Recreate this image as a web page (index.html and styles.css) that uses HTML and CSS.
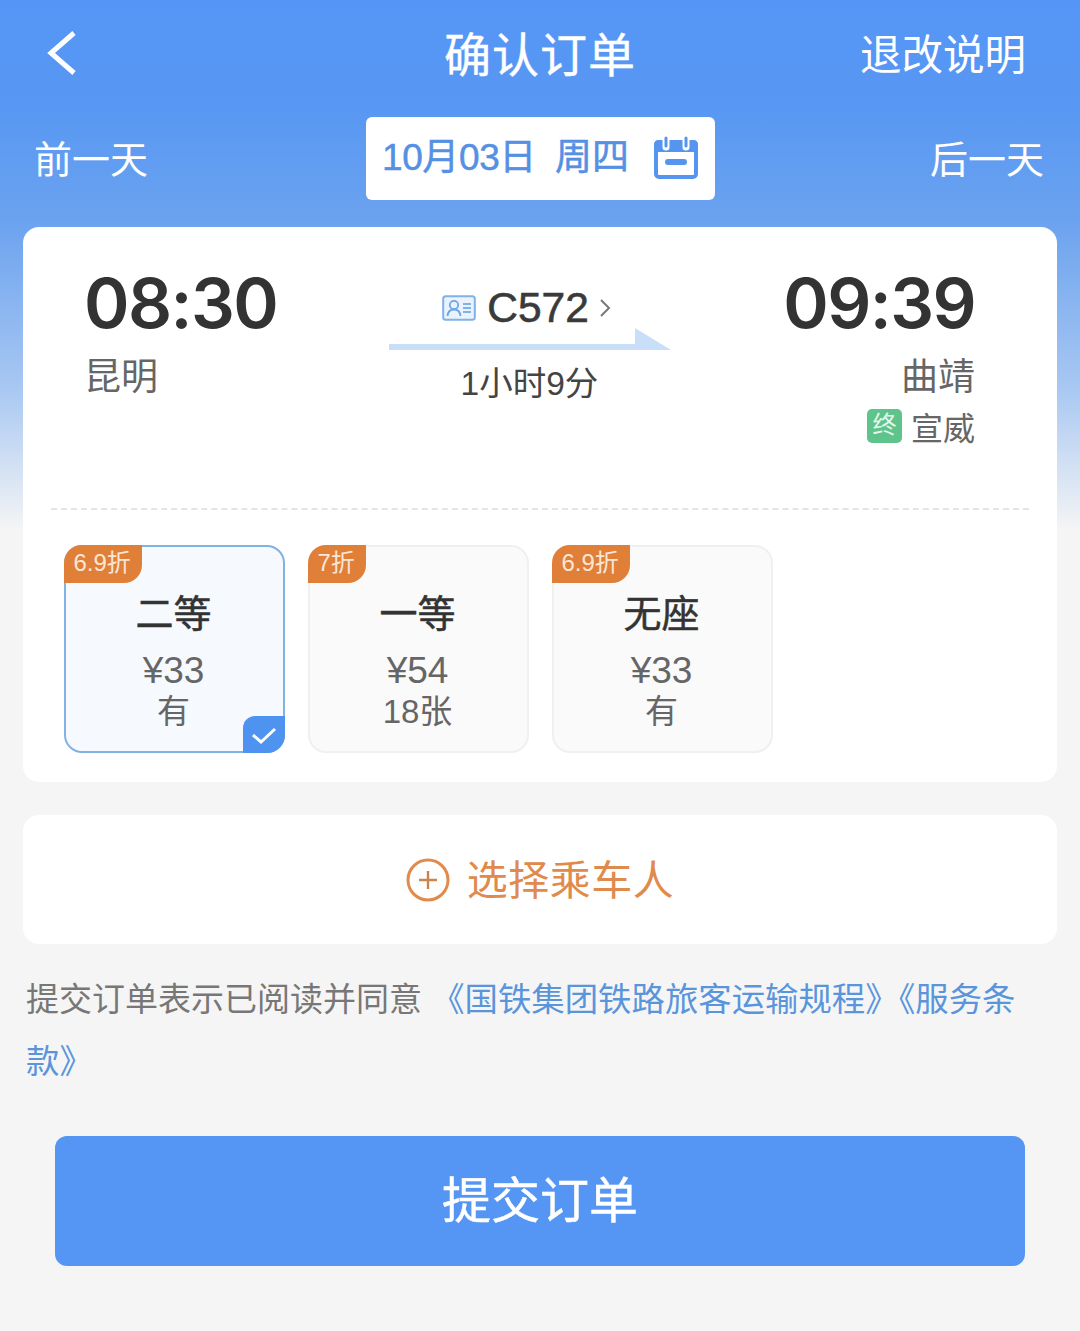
FILE: index.html
```html
<!DOCTYPE html>
<html lang="zh-CN">

<head>
    <meta charset="utf-8">
    <title>确认订单</title>
    <link rel="stylesheet" href="styles.css">
</head>

<body>
    <div class="page">
        <div class="top-nav">
            <svg class="back-icon" width="32" height="48" viewBox="0 0 32 48">
                <path d="M28 4 L5 24 L28 44" fill="none" stroke="#fff" stroke-width="5" />
            </svg>
            <div class="nav-title">确认订单</div>
            <div class="nav-link">退改说明</div>
        </div>

        <div class="date-row">
            <div class="date-side">前一天</div>
            <div class="date-box">
                <span class="date-text">10月03日</span>
                <span class="date-week">周四</span>
                <svg class="cal-icon" width="46" height="44" viewBox="0 0 46 44">
                    <rect x="3" y="6" width="40" height="35" rx="3" fill="#fff" stroke="#5595f0" stroke-width="4" />
                    <path d="M3 9 Q3 6 6 6 H40 Q43 6 43 9 V14 H3 Z" fill="#5595f0" stroke="#5595f0" stroke-width="4" stroke-linejoin="round" />
                    <path d="M13 3 V11 M33 3 V11" stroke="#fff" stroke-width="7" stroke-linecap="round" />
                    <path d="M13 2 V10 M33 2 V10" stroke="#5595f0" stroke-width="3" stroke-linecap="round" />
                    <rect x="12" y="23" width="22" height="6" rx="3" fill="#5595f0" />
                </svg>
            </div>
            <div class="date-side">后一天</div>
        </div>

        <div class="card train-card">
            <div class="train-info">
                <div class="station-col">
                    <div class="time">08:30</div>
                    <div class="station">昆明</div>
                </div>
                <div class="middle-col">
                    <div class="train-no">
                        <svg width="34" height="26" viewBox="0 0 34 26">
                            <rect x="1.2" y="1.2" width="31.6" height="23.6" rx="2.5" fill="#eaf3fd" stroke="#7fb2e8" stroke-width="2" />
                            <circle cx="12" cy="10" r="4.2" fill="none" stroke="#6ea6e6" stroke-width="1.8" />
                            <path d="M5.5 21 C6 16 9 14.5 12 14.5 C15 14.5 18 16 18.5 21" fill="none" stroke="#6ea6e6" stroke-width="1.8" />
                            <path d="M21 9 H29 M21 13 H29 M21 17 H29" stroke="#7fb2e8" stroke-width="1.8" />
                        </svg>
                        <span class="train-code">C572</span>
                        <svg width="12" height="22" viewBox="0 0 12 22">
                            <path d="M2 3 L10 11 L2 19" fill="none" stroke="#777" stroke-width="2" />
                        </svg>
                    </div>
                    <svg class="arrow" width="282" height="24" viewBox="0 0 282 24">
                        <path d="M0 16 H246 V0 L282 22 H0 Z" fill="#c9def8" />
                    </svg>
                    <div class="duration">1小时9分</div>
                </div>
                <div class="station-col end-col">
                    <div class="time">09:39</div>
                    <div class="station">曲靖</div>
                    <div class="terminal">
                        <span class="terminal-tag">终</span>
                        <span class="terminal-name">宣威</span>
                    </div>
                </div>
            </div>

            <div class="dash-line"></div>

            <div class="seat-list">
                <div class="seat seat-active">
                    <div class="seat-badge">6.9折</div>
                    <div class="seat-name">二等</div>
                    <div class="seat-price">¥33</div>
                    <div class="seat-left">有</div>
                    <div class="seat-check">
                        <svg width="26" height="20" viewBox="0 0 26 20">
                            <path d="M2 10 L10 17 L24 4" fill="none" stroke="#fff" stroke-width="3" />
                        </svg>
                    </div>
                </div>
                <div class="seat">
                    <div class="seat-badge">7折</div>
                    <div class="seat-name">一等</div>
                    <div class="seat-price">¥54</div>
                    <div class="seat-left">18张</div>
                </div>
                <div class="seat">
                    <div class="seat-badge">6.9折</div>
                    <div class="seat-name">无座</div>
                    <div class="seat-price">¥33</div>
                    <div class="seat-left">有</div>
                </div>
            </div>
        </div>

        <div class="card passenger-card">
            <svg width="44" height="44" viewBox="0 0 44 44">
                <circle cx="22" cy="22" r="20" fill="none" stroke="#e08a4c" stroke-width="3" />
                <path d="M22 13 V31 M13 22 H31" stroke="#c98550" stroke-width="2.4" />
            </svg>
            <span class="passenger-text">选择乘车人</span>
        </div>

        <p class="agreement">提交订单表示已阅读并同意 <a href="#">《国铁集团铁路旅客运输规程》《服务条</a><a href="#">款》</a></p>

        <div class="submit-btn">提交订单</div>
    </div>
</body>

</html>
```

FILE: styles.css
```css
* {
    box-sizing: border-box;
}

html, body {
    margin: 0;
    padding: 0;
}

body {
    font-family: "Liberation Sans", "Noto Sans CJK SC", sans-serif;
    background-color: #f5f5f5;
}

.page {
    width: 1080px;
    height: 1331px;
    overflow: hidden;
    background: linear-gradient(to bottom, #5595f5 0px, #5898f3 110px, #6ba2ef 220px, #a9c8f2 390px, #f5f5f5 530px);
}

.top-nav {
    position: relative;
    height: 106px;
    display: flex;
    align-items: center;
    justify-content: center;
    color: #fff;
}

.back-icon {
    position: absolute;
    left: 46px;
    top: 29px;
}

.nav-title {
    font-size: 47px;
    letter-spacing: 1px;
    margin-bottom: 4px;
    -webkit-text-stroke: 0.4px #fff;
}

.nav-link {
    position: absolute;
    right: 54px;
    top: 28px;
    font-size: 41.5px;
    line-height: 56px;
}

.date-row {
    height: 121px;
    padding: 11px 36px 0 34px;
    display: flex;
    justify-content: space-between;
    align-items: flex-start;
}

.date-side {
    color: #fff;
    font-size: 38px;
    line-height: 86px;
}

.date-box {
    width: 349px;
    height: 83px;
    margin-left: 3px;
    background-color: #fff;
    border-radius: 6px;
    color: #5590e4;
    display: flex;
    align-items: center;
    padding-left: 16px;
    font-size: 37px;
    -webkit-text-stroke: 0.5px #5590e4;
}

.date-text {
    letter-spacing: -0.4px;
    margin-bottom: 9px;
}

.date-week {
    margin-left: 19px;
    margin-bottom: 9px;
}

.cal-icon {
    margin-left: 24px;
    margin-bottom: 1px;
}

.card {
    background-color: #fff;
    border-radius: 16px;
    margin: 0 23px;
}

.train-card {
    height: 555px;
    padding: 0 28px;
}

.train-info {
    height: 281px;
    padding: 40px 54px 0 33px;
    display: flex;
    justify-content: space-between;
}

.station-col {
    width: 195px;
}

.end-col {
    text-align: right;
}

.time {
    font-family: Inter, "Liberation Sans", sans-serif;
    font-size: 69px;
    font-weight: 600;
    letter-spacing: -1.6px;
    line-height: 72px;
    color: #333;
    white-space: nowrap;
}

.station {
    font-size: 37px;
    line-height: 50px;
    margin-top: 14px;
    color: #666;
}

.terminal {
    display: flex;
    justify-content: flex-end;
    align-items: center;
    white-space: nowrap;
}

.terminal-tag {
    width: 35px;
    height: 34px;
    border-radius: 5px;
    background-color: #5fc48c;
    color: #e6f7ec;
    font-size: 24px;
    line-height: 32px;
    text-align: center;
}

.terminal-name {
    margin-left: 9px;
    font-size: 32px;
    color: #666;
}

.middle-col {
    width: 282px;
    text-align: center;
}

.train-no {
    display: flex;
    justify-content: center;
    align-items: center;
    height: 44px;
    margin-top: 19px;
    padding-right: 6px;
}

.train-code {
    margin-left: 11px;
    margin-right: 10px;
    font-size: 42.5px;
    color: #3a3a3a;
    -webkit-text-stroke: 0.6px #3a3a3a;
}

.arrow {
    display: block;
    margin-top: -2px;
}

.duration {
    font-size: 33.5px;
    line-height: 46px;
    margin-top: 9px;
    color: #444;
}

.dash-line {
    border-top: 2px dashed #e4e4e4;
}

.seat-list {
    display: flex;
    gap: 23px;
    padding: 35px 0 0 13px;
}

.seat {
    position: relative;
    width: 221px;
    height: 208px;
    border: 2px solid #f0f0f0;
    border-radius: 18px;
    background-color: #fafafa;
    text-align: center;
    padding: 41px 2px 0 0;
}

.seat-active {
    border-color: #82b2e4;
    background-color: #f6fafe;
}

.seat-badge {
    position: absolute;
    left: -2px;
    top: -2px;
    height: 38px;
    padding: 0 11px 0 9.5px;
    background-color: #e07f38;
    color: #fbe6d6;
    font-size: 24px;
    line-height: 36px;
    border-top-left-radius: 18px;
    border-bottom-right-radius: 18px;
}

.seat-name {
    font-size: 38px;
    line-height: 52px;
    color: #333;
    -webkit-text-stroke: 0.5px #333;
}

.seat-price {
    margin-top: 10px;
    font-size: 37px;
    line-height: 42px;
    color: #666;
}

.seat-left {
    font-size: 33px;
    line-height: 40px;
    color: #666;
}

.seat-check {
    position: absolute;
    right: -2px;
    bottom: -2px;
    width: 42px;
    height: 37px;
    background-color: #4f93f0;
    border-top-left-radius: 12px;
    border-bottom-right-radius: 18px;
    display: flex;
    align-items: center;
    justify-content: center;
}

.passenger-card {
    margin-top: 33px;
    height: 129px;
    display: flex;
    align-items: center;
    justify-content: center;
    gap: 17px;
}

.passenger-text {
    font-size: 41px;
    letter-spacing: 0.5px;
    padding-bottom: 6px;
    color: #e08a4c;
}

.agreement {
    margin: 25px 26px 0;
    font-size: 33px;
    line-height: 62px;
    color: #777;
    height: 130px;
}

.agreement a {
    font-size: 33.4px;
    color: #5a95dc;
    text-decoration: none;
}

.submit-btn {
    margin: 37px 55px 0;
    height: 130px;
    border-radius: 12px;
    background-color: #5595f3;
    color: #fff;
    font-size: 49px;
    line-height: 131px;
    text-align: center;
    -webkit-text-stroke: 0.5px #fff;
}
```
